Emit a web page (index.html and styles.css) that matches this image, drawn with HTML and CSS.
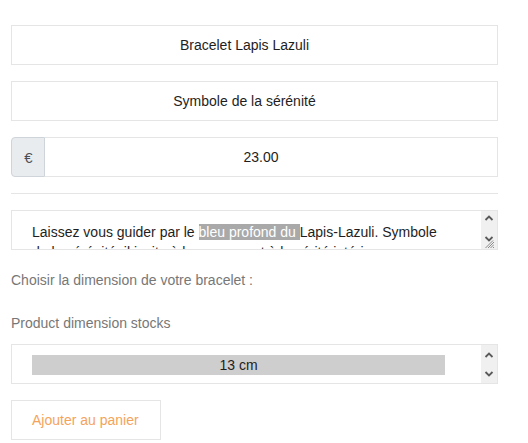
FILE: index.html
```html
<!DOCTYPE html>
<html lang="fr">
<head>
<meta charset="utf-8">
<title>Bracelet Lapis Lazuli</title>
<link rel="stylesheet" href="styles.css">
</head>
<body>
<form class="form">
  <input class="field" type="text" value="Bracelet Lapis Lazuli" readonly>
  <input class="field gap" type="text" value="Symbole de la sérénité" readonly>
  <div class="group gap">
    <span class="addon">€</span>
    <input class="field grow" type="text" value="23.00" readonly>
  </div>
  <hr class="sep">
  <div class="textarea">
    <div class="ta-text">Laissez vous guider par le <span class="sel">bleu profond du&nbsp;</span>Lapis-Lazuli. Symbole<br>de la sérénité, il invite à la sagesse et à la vérité intérieure pour</div>
    <div class="scroll">
      <svg class="chev" width="10" height="8" viewBox="0 0 10 8"><path d="M1.5 6 L5 2.5 L8.5 6" fill="none" stroke="#5a5a5a" stroke-width="1.8"/></svg>
      <svg class="chev" width="10" height="14" viewBox="0 0 10 14"><path d="M1.5 2 L5 5.5 L8.5 2" fill="none" stroke="#5a5a5a" stroke-width="1.8"/><path d="M4 13 L10 7 M6.5 13 L10 9.5 M9 13 L10 12 M1.5 13 L9 5.5" stroke="#8a8a8a" stroke-width="1"/></svg>
    </div>
  </div>
  <label class="lbl lbl-first">Choisir la dimension de votre bracelet :</label>
  <label class="lbl lbl-second">Product dimension stocks</label>
  <div class="select">
    <div class="options">
      <div class="opt opt-active">13 cm</div>
      <div class="opt opt-next">14 cm</div>
    </div>
    <div class="scroll scroll-sel">
      <svg class="chev" width="10" height="8" viewBox="0 0 10 8"><path d="M1.5 6 L5 2.5 L8.5 6" fill="none" stroke="#5a5a5a" stroke-width="1.8"/></svg>
      <svg class="chev" width="10" height="8" viewBox="0 0 10 8"><path d="M1.5 2 L5 5.5 L8.5 2" fill="none" stroke="#5a5a5a" stroke-width="1.8"/></svg>
    </div>
  </div>
  <button class="btn" type="button">Ajouter au panier</button>
</form>
</body>
</html>
```

FILE: styles.css
```css
* { box-sizing: border-box; }

html, body {
  margin: 0;
  padding: 0;
  background: #ffffff;
}

body {
  font-family: "Liberation Sans", Arial, sans-serif;
  font-size: 14px;
  color: #222222;
}

.form {
  display: flex;
  flex-direction: column;
  width: 487px;
  margin: 0 0 0 11px;
  padding-top: 25px;
}

.field {
  display: block;
  width: 100%;
  height: 40px;
  margin: 0;
  padding: 0 30px 0 10px;
  border: 1px solid #e5e5e5;
  border-radius: 0;
  background: #ffffff;
  font-family: inherit;
  font-size: 14px;
  color: #1e1e1e;
  text-align: center;
  outline: none;
}

.gap { margin-top: 16px; }

.group {
  display: flex;
  height: 40px;
}

.addon {
  flex: 0 0 34px;
  display: flex;
  align-items: center;
  justify-content: center;
  padding-left: 1px;
  background: #e9ecef;
  border: 1px solid #ced4da;
  border-radius: 4px 0 0 4px;
  color: #495057;
  font-size: 15px;
}

.field.grow {
  flex: 1;
  width: auto;
  border-left: none;
}

.sep {
  margin: 16px 0 0 0;
  border: 0;
  border-top: 1px solid #e5e5e5;
  height: 0;
}

.textarea {
  margin-top: 16px;
  height: 40px;
  border: 1px solid #e5e5e5;
  overflow: hidden;
  display: flex;
}

.ta-text {
  flex: 1;
  padding: 11px 20px 0 20px;
  line-height: 20px;
  white-space: nowrap;
  color: #1e1e1e;
}

.sel {
  background: #a9a9a9;
  color: #ffffff;
}

.scroll {
  flex: 0 0 16px;
  background: #f0f0f0;
  display: flex;
  flex-direction: column;
  align-items: center;
  justify-content: space-between;
  padding: 3px 0 0 0;
}

.scroll-sel {
  padding: 6px 0 5px 0;
}

.chev { display: block; }

.lbl {
  display: block;
  line-height: 20px;
  color: #777777;
}

.lbl-first { margin-top: 20px; }
.lbl-second { margin-top: 23px; }

.select {
  margin-top: 11px;
  height: 40px;
  border: 1px solid #e5e5e5;
  display: flex;
  overflow: hidden;
}

.options {
  flex: 1;
  padding: 10px 36px 0 20px;
}

.opt {
  height: 20px;
  line-height: 20px;
  text-align: center;
  color: #1e1e1e;
}

.opt-active {
  background: #cecece;
}

.opt-next {
  margin-top: 3px;
}

.btn {
  align-self: flex-start;
  margin-top: 16px;
  width: 150px;
  height: 40px;
  padding: 0 20px;
  border: 1px solid #e5e5e5;
  background: #ffffff;
  font-family: inherit;
  font-size: 14px;
  color: #f5a35a;
  text-align: left;
}
```
